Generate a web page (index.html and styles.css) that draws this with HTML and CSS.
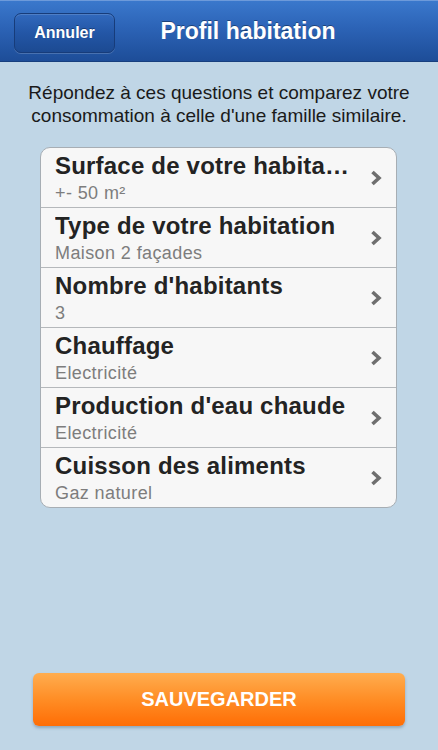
FILE: index.html
```html
<!DOCTYPE html>
<html lang="fr">
<head>
<meta charset="utf-8">
<title>Profil habitation</title>
<link rel="stylesheet" href="styles.css">
</head>
<body>
<div class="screen">
  <header class="navbar">
    <button class="nav-btn">Annuler</button>
    <h1 class="nav-title">Profil habitation</h1>
  </header>
  <p class="intro">Répondez à ces questions et comparez votre consommation à celle d'une famille similaire.</p>
  <ul class="card">
    <li class="row"><div class="row-text"><div class="row-title">Surface de votre habita…</div><div class="row-sub">+- 50 m²</div></div><svg class="chev" viewBox="0 0 12 16"><path d="M2.5 2 L9 8 L2.5 14" /></svg></li>
    <li class="row"><div class="row-text"><div class="row-title">Type de votre habitation</div><div class="row-sub">Maison 2 façades</div></div><svg class="chev" viewBox="0 0 12 16"><path d="M2.5 2 L9 8 L2.5 14" /></svg></li>
    <li class="row"><div class="row-text"><div class="row-title">Nombre d'habitants</div><div class="row-sub">3</div></div><svg class="chev" viewBox="0 0 12 16"><path d="M2.5 2 L9 8 L2.5 14" /></svg></li>
    <li class="row"><div class="row-text"><div class="row-title">Chauffage</div><div class="row-sub">Electricité</div></div><svg class="chev" viewBox="0 0 12 16"><path d="M2.5 2 L9 8 L2.5 14" /></svg></li>
    <li class="row"><div class="row-text"><div class="row-title">Production d'eau chaude</div><div class="row-sub">Electricité</div></div><svg class="chev" viewBox="0 0 12 16"><path d="M2.5 2 L9 8 L2.5 14" /></svg></li>
    <li class="row"><div class="row-text"><div class="row-title">Cuisson des aliments</div><div class="row-sub">Gaz naturel</div></div><svg class="chev" viewBox="0 0 12 16"><path d="M2.5 2 L9 8 L2.5 14" /></svg></li>
  </ul>
  <div class="spacer"></div>
  <div class="footer">
    <button class="save-btn">SAUVEGARDER</button>
  </div>
</div>
</body>
</html>
```

FILE: styles.css
```css
* { box-sizing: border-box; }
html, body { margin: 0; padding: 0; }
body {
  font-family: "Liberation Sans", Arial, sans-serif;
  background: #c0d6e6;
  width: 438px;
  height: 750px;
  overflow: hidden;
}
.screen {
  display: flex;
  flex-direction: column;
  height: 750px;
}
.navbar {
  position: relative;
  height: 62px;
  background: linear-gradient(to bottom, #3a78cc 0%, #2c63b6 45%, #1d4d98 100%);
  border-top: 1px solid #6d9ada;
  border-bottom: 1px solid #173f7e;
  display: flex;
  align-items: center;
  justify-content: center;
  flex-shrink: 0;
}
.nav-btn {
  position: absolute;
  left: 14px;
  top: 12px;
  width: 101px;
  height: 40px;
  border-radius: 7px;
  border: 1px solid #173c7a;
  background: linear-gradient(to bottom, #3169bd 0%, #2356a6 50%, #1c4a92 100%);
  box-shadow: inset 0 1px 0 rgba(255,255,255,0.15), 0 1px 0 rgba(255,255,255,0.18);
  color: #fff;
  font-family: "Liberation Sans", Arial, sans-serif;
  font-weight: bold;
  font-size: 16px;
  padding: 0;
  text-shadow: 0 -1px 0 rgba(0,0,0,0.35);
}
.nav-title {
  margin: 0 0 0 58px;
  color: #fff;
  font-size: 23px;
  font-weight: bold;
  text-shadow: 0 -1px 0 rgba(0,0,0,0.35);
}
.intro {
  margin: 19px 8px 0;
  text-align: center;
  color: #1a1a1a;
  font-size: 19px;
  line-height: 23px;
}
.card {
  list-style: none;
  margin: 20px 41px 0 40px;
  padding: 0;
  background: #f7f7f7;
  border: 1px solid #a7aeb4;
  border-radius: 10px;
  overflow: hidden;
}
.row {
  height: 60px;
  display: flex;
  align-items: center;
  padding: 0 14px 0 14px;
  border-top: 1px solid #b5b8bb;
}
.row:first-child { border-top: none; height: 59px; }
.row-text {
  flex: 1;
  min-width: 0;
  align-self: flex-start;
  padding-top: 4px;
}
.row-title {
  font-size: 24px;
  font-weight: bold;
  color: #232323;
  line-height: 28px;
  letter-spacing: 0.2px;
  white-space: nowrap;
  overflow: hidden;
}
.row-sub {
  font-size: 18px;
  letter-spacing: 0.4px;
  color: #7d7d7d;
  line-height: 22px;
  margin-top: 2px;
}
.chev {
  width: 12px;
  height: 16px;
  flex-shrink: 0;
  margin-left: 8px;
}
.chev path {
  fill: none;
  stroke: #6f6f6f;
  stroke-width: 3.6;
}
.spacer { flex: 1; }
.footer {
  padding: 0 33px 24px 33px;
}
.save-btn {
  display: block;
  width: 372px;
  height: 53px;
  border: none;
  border-radius: 6px;
  background: linear-gradient(to bottom, #ffad4f 0%, #ff8d25 50%, #ff6d05 100%);
  box-shadow: 0 2px 3px rgba(60,80,100,0.35);
  color: #fff;
  font-family: "Liberation Sans", Arial, sans-serif;
  font-weight: bold;
  font-size: 20px;
  padding: 0;
}
```
